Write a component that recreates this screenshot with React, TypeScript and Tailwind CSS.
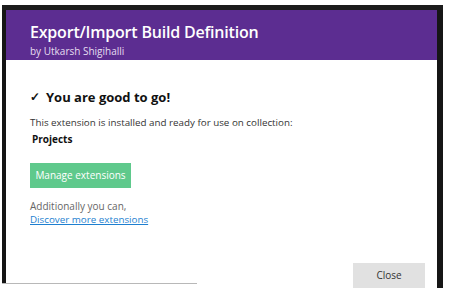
export default function App() {
  return (
    <div className="relative w-[449px] h-[298px] bg-white overflow-hidden font-['Open_Sans',sans-serif]">
      <div className="ml-[2px] mt-[5px] w-[441px] flex flex-col">
        <div className="h-[5px] bg-[#1c1c1c]" />
        <div className="flex items-start">
          <div className="w-[4px] h-[274px] bg-[#151515]" />
          <div className="flex-1 flex flex-col">
            <div className="h-[50px] bg-[#5c2d91] pl-[24px] pt-[12px] text-white">
              <div className="text-[16px] font-semibold leading-[20px] tracking-[-0.2px]">Export/Import Build Definition</div>
              <div className="mt-[3px] text-[10px] leading-[13px] text-[#e6def0]">by Utkarsh Shigihalli</div>
            </div>
            <div className="h-[228px] flex flex-col pl-[24px] pt-[29px] pr-[12px]">
              <div className="flex items-center gap-[6px] text-[13px] font-bold leading-[16px] text-[#111]">
                <span className="text-[12px]">✓</span>
                <span>You are good to go!</span>
              </div>
              <div className="mt-[10px] text-[9.8px] leading-[16px] text-[#333]">
                This extension is installed and ready for use on collection:
              </div>
              <div className="pl-[2px] text-[10px] font-bold leading-[16px] text-[#111]">Projects</div>
              <button className="mt-[16px] w-[101px] h-[25px] bg-[#5fc98c] text-white text-[10px] leading-[25px] text-center">
                Manage extensions
              </button>
              <div className="mt-[12px] text-[10px] leading-[13px] text-[#666]">Additionally you can,</div>
              <a className="text-[9.8px] leading-[13px] text-[#1e7fd0] underline self-start">Discover more extensions</a>
              <div className="flex-1" />
              <div className="flex justify-end">
                <button className="w-[72px] h-[25px] bg-[#e1e1e1] text-[10px] text-[#333]">Close</button>
              </div>
            </div>
          </div>
          <div className="w-[6px] h-[278px] bg-[#161616]" />
        </div>
      </div>
      <div className="absolute left-[2px] top-[283px] w-[195px] h-[1px] bg-[#b8b8b8]" />
    </div>
  );
}
